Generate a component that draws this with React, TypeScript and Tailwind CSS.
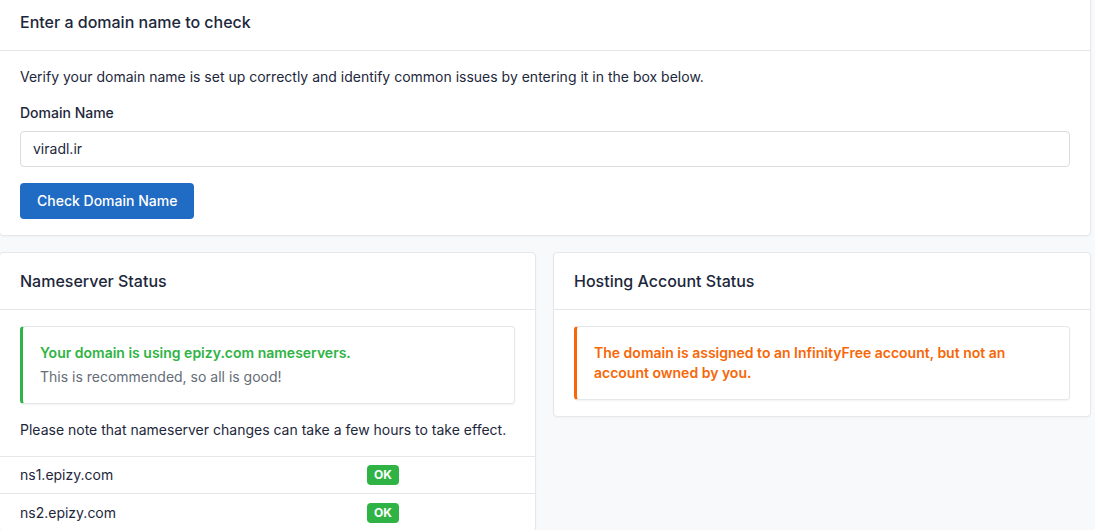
import React from "react";

export default function App() {
  return (
    <div
      className="w-[1095px] h-[530px] overflow-hidden bg-[#f8f9fb] text-[#1d273b] text-sm"
      style={{ fontFamily: "Inter, 'Noto Sans', sans-serif" }}
    >
      <div className="w-[1092px] mt-[-7px] ml-[-1px] flex flex-col gap-4">
        {/* Top card */}
        <div className="bg-white border border-[#e6e7e9] rounded-[4px] shadow-[0_1px_2px_rgba(30,41,59,0.04)]">
          <div className="h-[57px] px-5 flex items-center border-b border-[#e6e7e9]">
            <h3 className="text-[16px] font-medium leading-6">Enter a domain name to check</h3>
          </div>
          <div className="px-5 pt-4 pb-4">
            <p className="leading-5 mb-4">
              Verify your domain name is set up correctly and identify common issues by entering it in the box below.
            </p>
            <div className="leading-5 font-medium mb-2">Domain Name</div>
            <div className="h-[36px] border border-[#dadcde] rounded-[4px] px-3 flex items-center leading-5 mb-4">
              viradl.ir
            </div>
            <button className="h-[36px] px-[17px] bg-[#206bc4] text-white font-medium rounded-[4px] leading-5">
              Check Domain Name
            </button>
          </div>
        </div>

        {/* Bottom row */}
        <div className="flex gap-[17px] items-start">
          <div className="w-[537px] bg-white border border-[#e6e7e9] rounded-[4px] shadow-[0_1px_2px_rgba(30,41,59,0.04)]">
            <div className="h-[57px] px-5 flex items-center border-b border-[#e6e7e9]">
              <h3 className="text-[16px] font-medium leading-6">Nameserver Status</h3>
            </div>
            <div className="px-5 pt-4 pb-4">
              <div className="border border-[#e6e7e9] border-l-[3px] border-l-[#2fb344] rounded-[4px] p-4 pl-[17px] shadow-[0_1px_2px_rgba(30,41,59,0.06)]">
                <div className="text-[#2fb344] font-semibold leading-5 mb-1">
                  Your domain is using epizy.com nameservers.
                </div>
                <div className="text-[#656d77] leading-5">This is recommended, so all is good!</div>
              </div>
              <p className="leading-5 mt-4">
                Please note that nameserver changes can take a few hours to take effect.
              </p>
            </div>
            <div className="border-t border-[#e6e7e9]">
              {["ns1.epizy.com", "ns2.epizy.com"].map((ns, i) => (
                <div
                  key={ns}
                  className={
                    i === 0
                      ? "h-[37px] flex items-center border-b border-[#e6e7e9]"
                      : "h-[37px] flex items-center"
                  }
                >
                  <div className="w-[367px] pl-5 leading-5">{ns}</div>
                  <span className="h-[20px] px-[7px] bg-[#2fb344] text-white text-[12px] font-bold rounded-[4px] flex items-center">
                    OK
                  </span>
                </div>
              ))}
            </div>
          </div>

          <div className="w-[538px] bg-white border border-[#e6e7e9] rounded-[4px] shadow-[0_1px_2px_rgba(30,41,59,0.04)]">
            <div className="h-[57px] px-5 flex items-center border-b border-[#e6e7e9]">
              <h3 className="text-[16px] font-medium leading-6">Hosting Account Status</h3>
            </div>
            <div className="px-5 pt-4 pb-4">
              <div className="border border-[#e6e7e9] border-l-[3px] border-l-[#f76707] rounded-[4px] p-4 pl-[17px] shadow-[0_1px_2px_rgba(30,41,59,0.06)]">
                <div className="text-[#f76707] font-semibold leading-5 w-[440px]">
                  The domain is assigned to an InfinityFree account, but not an account owned by you.
                </div>
              </div>
            </div>
          </div>
        </div>
      </div>
    </div>
  );
}
